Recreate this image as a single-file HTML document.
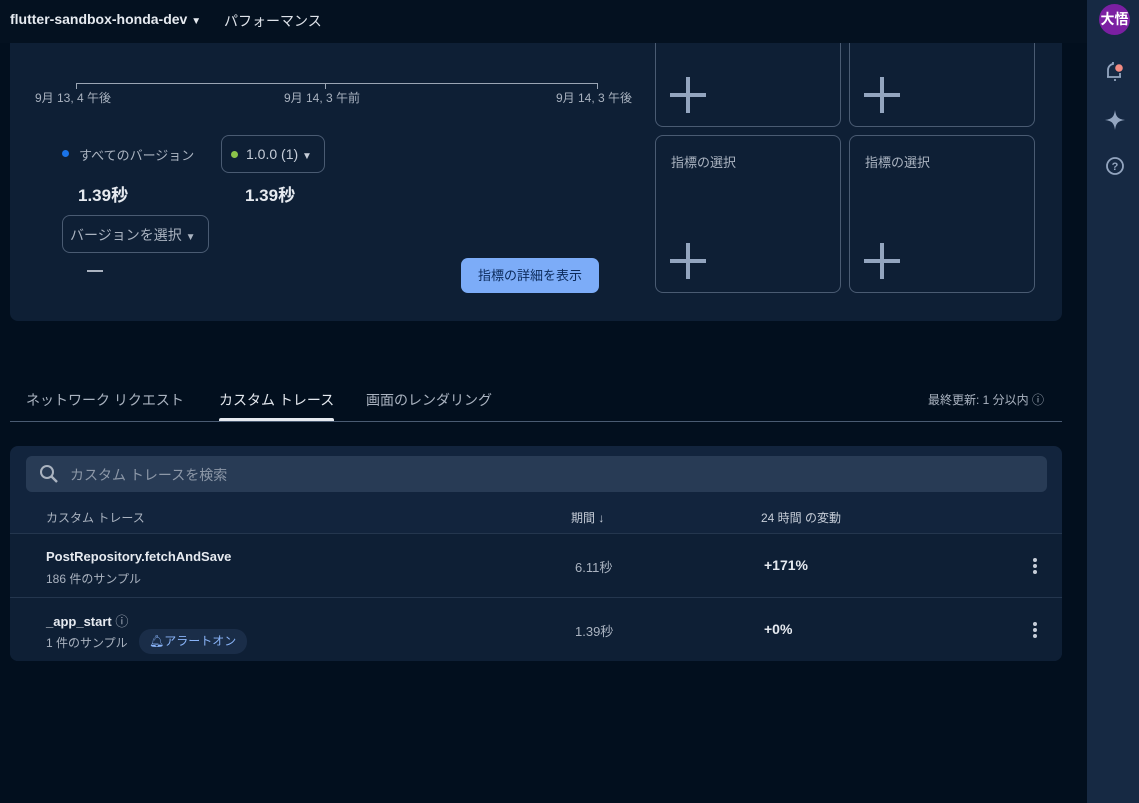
<!DOCTYPE html>
<html><head><meta charset="utf-8"><style>
*{box-sizing:border-box;margin:0;padding:0}
body{width:1139px;height:803px;background:#020f1e;font-family:"Liberation Sans","Noto Sans CJK JP",sans-serif;color:#c6cdd8;position:relative;overflow:hidden;font-size:13px}
.abs{position:absolute}
.side{left:1087px;top:0;width:52px;height:803px;background:#162943}
.card{left:10px;top:43px;width:1052px;height:278px;background:#0e1f35;border-radius:0 0 8px 8px}
.mc{position:absolute;border:1px solid #4a5b72;border-radius:8px;width:186px}
.plus{position:absolute;left:14px;width:36px;height:36px}
.plus:before{content:"";position:absolute;left:16px;top:0;width:4px;height:36px;background:#93a5bf}
.plus:after{content:"";position:absolute;left:0;top:16px;width:36px;height:4px;background:#93a5bf}
.mc span{position:absolute;left:15px;top:16px;font-size:13px;color:#aab3c0}
.tab{top:390px;font-size:14px;color:#aab3c0}
.tbl{left:10px;top:446px;width:1052px;height:215px;background:#12243d;border-radius:8px;overflow:hidden}
.row{position:absolute;left:0;width:1052px;height:64px;background:#0e1f35;border-top:1px solid #24364e}
.dots{position:absolute;left:1023px;width:4px}
.dots i{display:block;width:4px;height:4px;border-radius:2px;background:#c6cdd8;margin-bottom:2px}
</style></head><body>
<div class="abs" style="left:0;top:0;width:1087px;height:43px;background:#041120"></div>
<div class="abs" style="left:10px;top:11px;font-size:14px;font-weight:bold;color:#e6eaf0">flutter-sandbox-honda-dev <span style="font-size:10px">▼</span></div>
<div class="abs" style="left:224px;top:11px;font-size:14px;color:#dfe3ea">パフォーマンス</div>
<div class="abs side"></div>
<div class="abs" style="left:1099px;top:4px;width:31px;height:31px;border-radius:50%;background:#7b1fa2;color:#fff;font-weight:bold;font-size:14px;text-align:center;line-height:31px">大悟</div>
<svg class="abs" style="left:1103px;top:59px" width="24" height="24" viewBox="0 0 24 24"><path d="M5 18V11a6 6 0 0 1 5-6V3M4 18h14M11 21h2" stroke="#93a5bf" stroke-width="1.8" fill="none"/><path d="M17 18v-4" stroke="#93a5bf" stroke-width="1.8"/><circle cx="16" cy="9" r="3.8" fill="#f28b82"/></svg>
<svg class="abs" style="left:1104px;top:109px" width="22" height="22" viewBox="0 0 22 22"><path d="M11 1C12 8 14 10 21 11C14 12 12 14 11 21C10 14 8 12 1 11C8 10 10 8 11 1Z" fill="#93a5bf"/></svg>
<svg class="abs" style="left:1104px;top:156px" width="22" height="22" viewBox="0 0 22 22"><circle cx="11" cy="10" r="8" stroke="#93a5bf" stroke-width="1.8" fill="none"/><text x="11" y="14" font-size="11" font-family="Liberation Sans" text-anchor="middle" fill="#93a5bf" font-weight="bold">?</text></svg>
<div class="abs card"></div>
<div class="abs" style="left:76px;top:83px;width:522px;height:1px;background:#9aa5b4"></div>
<div class="abs" style="left:76px;top:83px;width:1px;height:6px;background:#9aa5b4"></div>
<div class="abs" style="left:325px;top:83px;width:1px;height:6px;background:#9aa5b4"></div>
<div class="abs" style="left:597px;top:83px;width:1px;height:6px;background:#9aa5b4"></div>
<div class="abs" style="left:35px;top:89px;font-size:12px;color:#aab3c0">9月 13, 4 午後</div>
<div class="abs" style="left:284px;top:89px;font-size:12px;color:#aab3c0">9月 14, 3 午前</div>
<div class="abs" style="left:556px;top:89px;font-size:12px;color:#aab3c0">9月 14, 3 午後</div>
<div class="abs" style="left:62px;top:150px;width:7px;height:7px;border-radius:50%;background:#1a73e8"></div>
<div class="abs" style="left:79px;top:145px;font-size:13px;color:#aab3c0">すべてのバージョン</div>
<div class="abs" style="left:221px;top:135px;width:104px;height:38px;border:1px solid #4a5b72;border-radius:8px"></div>
<div class="abs" style="left:231px;top:151px;width:7px;height:7px;border-radius:50%;background:#8bc34a"></div>
<div class="abs" style="left:246px;top:146px;font-size:14px;color:#c6cdd8">1.0.0 (1) <span style="font-size:10px">▼</span></div>
<div class="abs" style="left:78px;top:181px;font-size:17px;font-weight:bold;color:#e6eaf0">1.39秒</div>
<div class="abs" style="left:245px;top:181px;font-size:17px;font-weight:bold;color:#e6eaf0">1.39秒</div>
<div class="abs" style="left:62px;top:215px;width:147px;height:38px;border:1px solid #4a5b72;border-radius:8px"></div>
<div class="abs" style="left:70px;top:225px;font-size:14px;color:#aab3c0">バージョンを選択 <span style="font-size:10px">▼</span></div>
<div class="abs" style="left:87px;top:270px;width:16px;height:2px;background:#aab3c0"></div>
<div class="abs" style="left:461px;top:258px;width:138px;height:35px;border-radius:7px;background:#7cacf8;color:#0b2a5a;font-size:13px;text-align:center;line-height:35px">指標の詳細を表示</div>
<div class="mc" style="left:655px;top:30px;height:97px"><div class="plus" style="top:46px"></div></div>
<div class="mc" style="left:849px;top:30px;height:97px"><div class="plus" style="top:46px"></div></div>
<div class="abs" style="left:640px;top:30px;width:440px;height:13px;background:#041120"></div>
<div class="mc" style="left:655px;top:135px;height:158px"><span>指標の選択</span><div class="plus" style="top:107px"></div></div>
<div class="mc" style="left:849px;top:135px;height:158px"><span>指標の選択</span><div class="plus" style="top:107px"></div></div>
<div class="abs tab" style="left:26px">ネットワーク リクエスト</div>
<div class="abs tab" style="left:219px;color:#e6eaf0">カスタム トレース</div>
<div class="abs tab" style="left:366px">画面のレンダリング</div>
<div class="abs" style="left:928px;top:391px;font-size:12px;color:#aab3c0">最終更新: 1 分以内 ⓘ</div>
<div class="abs" style="left:10px;top:421px;width:1052px;height:1px;background:#4a5b72"></div>
<div class="abs" style="left:219px;top:418px;width:115px;height:3px;background:#e6eaf0;border-radius:2px 2px 0 0"></div>
<div class="abs tbl">
 <div class="abs" style="left:16px;top:10px;width:1021px;height:36px;background:#283b55;border-radius:6px"></div>
 <svg class="abs" style="left:28px;top:17px" width="22" height="22" viewBox="0 0 22 22"><circle cx="9" cy="9" r="6" stroke="#aab3c0" stroke-width="2" fill="none"/><path d="M13.5 13.5L19 19" stroke="#aab3c0" stroke-width="2.4"/></svg>
 <div class="abs" style="left:60px;top:19px;font-size:14px;color:#8d98a8">カスタム トレースを検索</div>
 <div class="abs" style="left:36px;top:63px;font-size:12px;color:#aab3c0">カスタム トレース</div>
 <div class="abs" style="left:561px;top:63px;font-size:12px;color:#c6cdd8">期間 <b>↓</b></div>
 <div class="abs" style="left:751px;top:63px;font-size:12px;color:#c6cdd8">24 時間 の変動</div>
 <div class="row" style="top:87px">
  <div class="abs" style="left:36px;top:15px;font-size:13px;font-weight:bold;color:#e6eaf0">PostRepository.fetchAndSave</div>
  <div class="abs" style="left:36px;top:36px;font-size:12px;color:#aab3c0">186 件のサンプル</div>
  <div class="abs" style="left:565px;top:23px;font-size:13px;color:#aab3c0">6.11秒</div>
  <div class="abs" style="left:754px;top:23px;font-size:14px;font-weight:bold;color:#e6eaf0">+171%</div>
  <div class="dots" style="top:24px"><i></i><i></i><i></i></div>
 </div>
 <div class="row" style="top:151px">
  <div class="abs" style="left:36px;top:13px;font-size:13px;font-weight:bold;color:#e6eaf0">_app_start <span style="font-weight:normal;color:#aab3c0">ⓘ</span></div>
  <div class="abs" style="left:36px;top:36px;font-size:12px;color:#aab3c0">1 件のサンプル</div>
  <div class="abs" style="left:129px;top:31px;width:108px;height:25px;border-radius:12px;background:#1a2d48;color:#8ab4f8;font-size:12px;line-height:25px;padding-left:10px">🔔︎アラートオン</div>
  <div class="abs" style="left:565px;top:23px;font-size:13px;color:#aab3c0">1.39秒</div>
  <div class="abs" style="left:754px;top:23px;font-size:14px;font-weight:bold;color:#e6eaf0">+0%</div>
  <div class="dots" style="top:24px"><i></i><i></i><i></i></div>
 </div>
</div>
</body></html>
